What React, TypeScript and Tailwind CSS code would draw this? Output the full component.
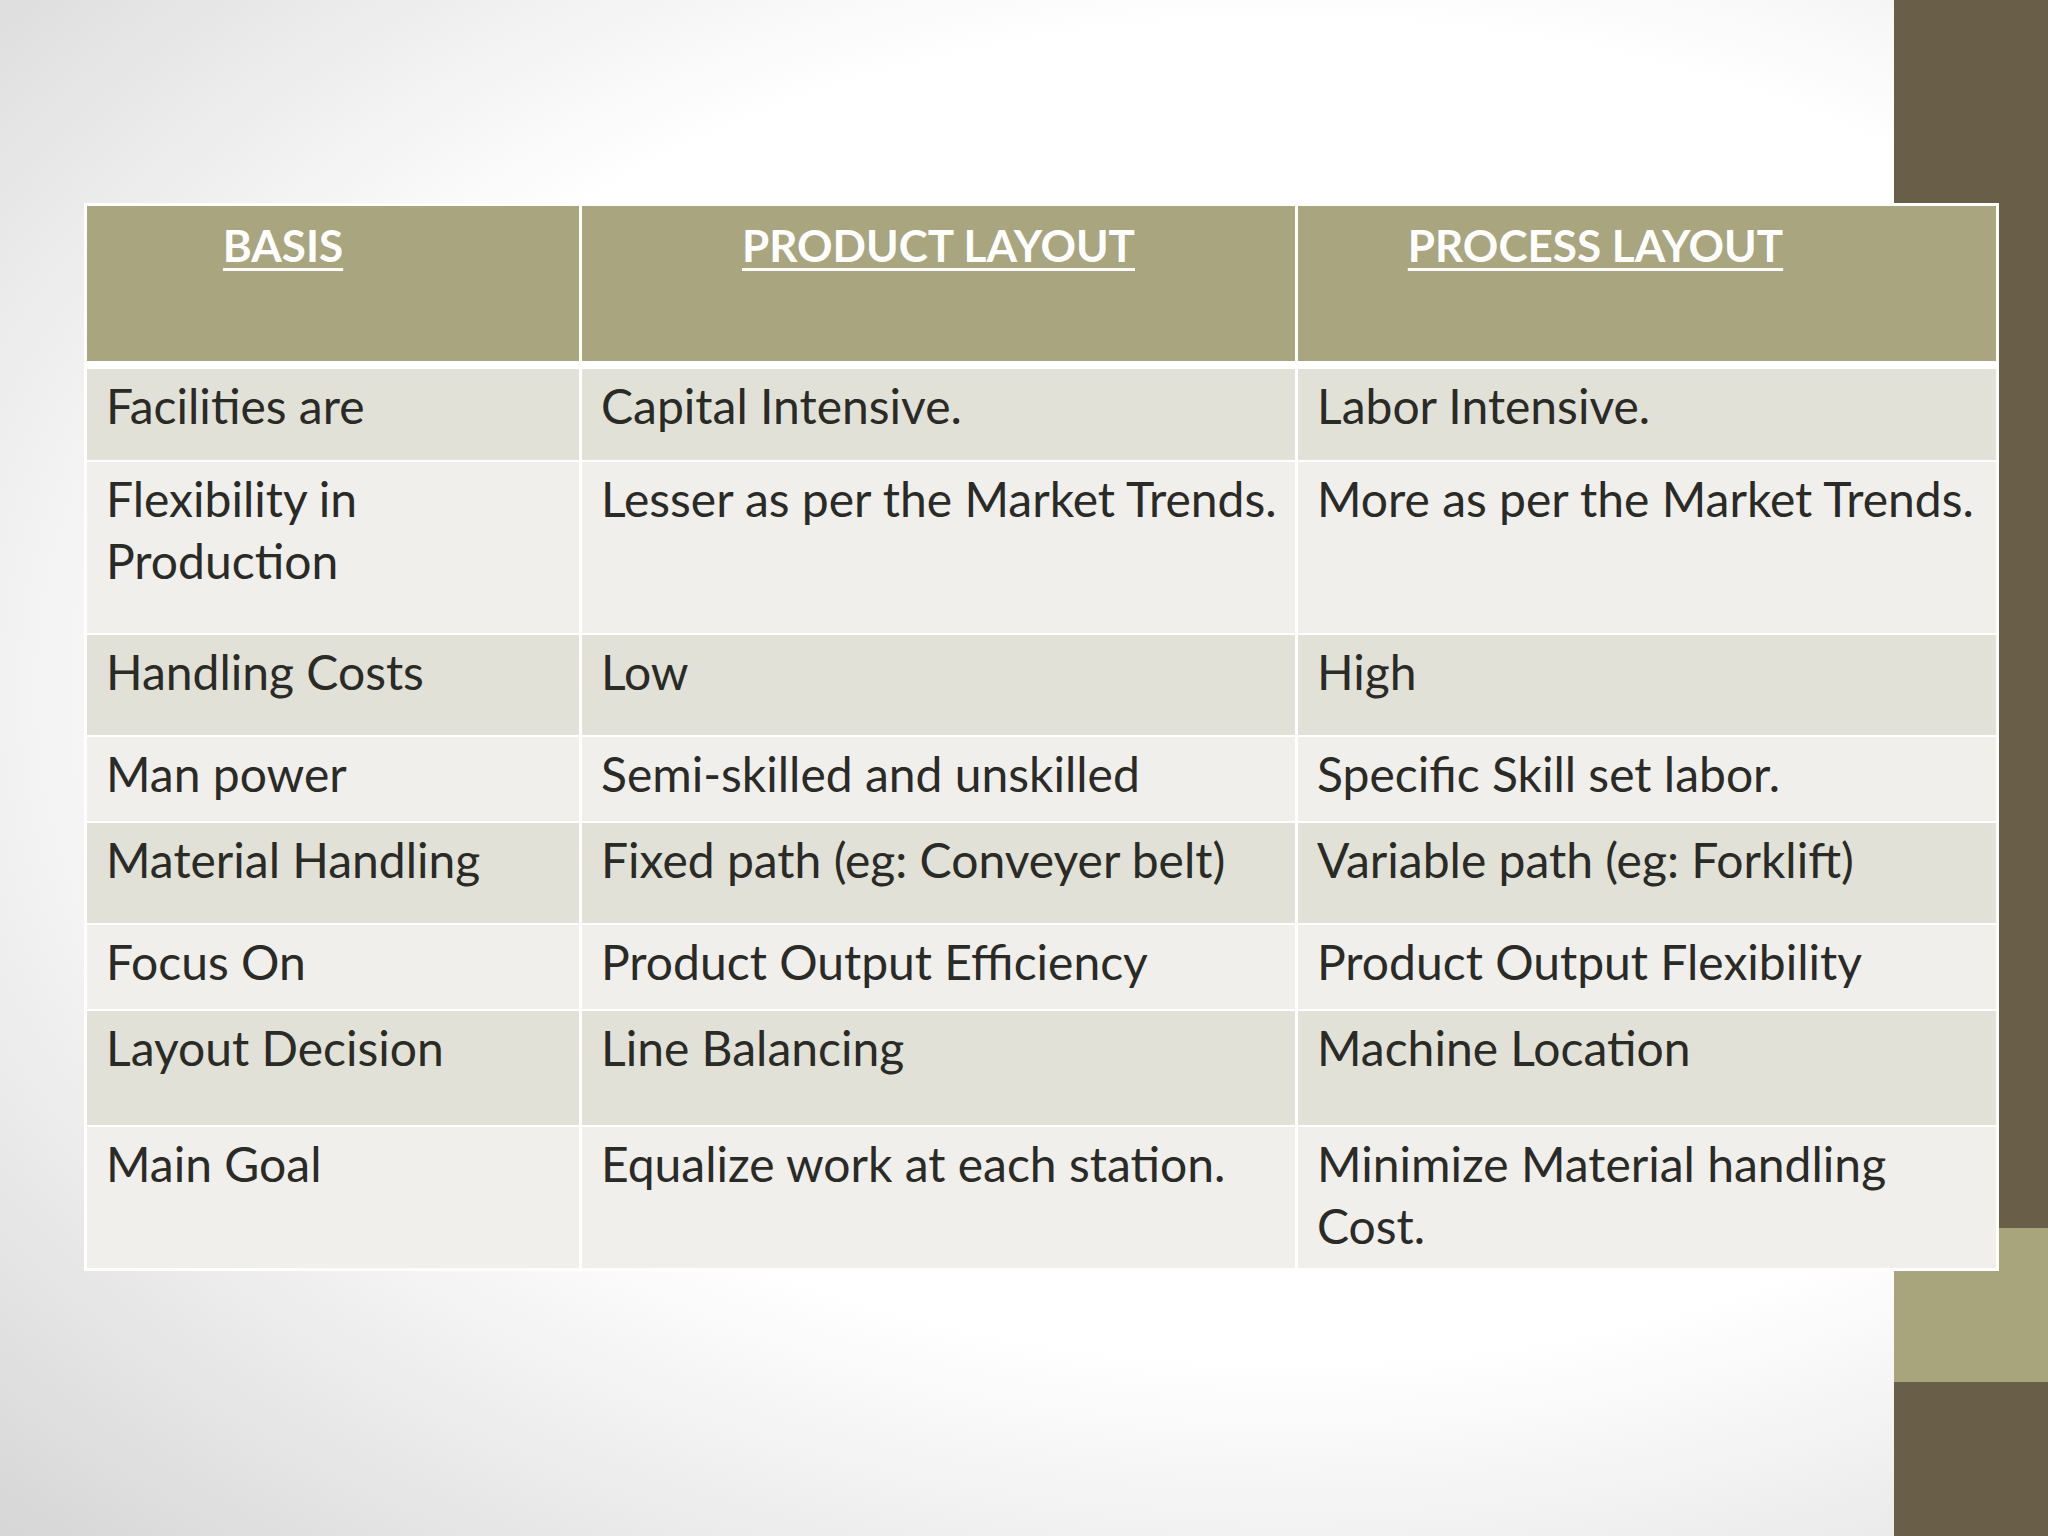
import React from 'react';

type Row = {
  basis: string[];
  product: string[];
  process: string[];
  height: string;
  tone: 'odd' | 'even';
};

const rows: Row[] = [
  { basis: ['Facilities are'], product: ['Capital Intensive.'], process: ['Labor Intensive.'], height: 'h-[91px]', tone: 'odd' },
  { basis: ['Flexibility in', 'Production'], product: ['Lesser as per the Market Trends.'], process: ['More as per the Market Trends.'], height: 'h-[171px]', tone: 'even' },
  { basis: ['Handling Costs'], product: ['Low'], process: ['High'], height: 'h-[100px]', tone: 'odd' },
  { basis: ['Man power'], product: ['Semi-skilled and unskilled'], process: ['Specific Skill set labor.'], height: 'h-[84px]', tone: 'even' },
  { basis: ['Material Handling'], product: ['Fixed path (eg: Conveyer belt)'], process: ['Variable path (eg: Forklift)'], height: 'h-[100px]', tone: 'odd' },
  { basis: ['Focus On'], product: ['Product Output Efficiency'], process: ['Product Output Flexibility'], height: 'h-[84px]', tone: 'even' },
  { basis: ['Layout Decision'], product: ['Line Balancing'], process: ['Machine Location'], height: 'h-[114px]', tone: 'odd' },
  { basis: ['Main Goal'], product: ['Equalize work at each station.'], process: ['Minimize Material handling', 'Cost.'], height: 'h-[141px]', tone: 'even' },
];

const Cell: React.FC<{ lines: string[]; tone: 'odd' | 'even' }> = ({ lines, tone }) => (
  <div
    className={`pl-[19px] pr-2 pt-[6px] text-[48px] leading-[62px] text-[#2a2a26] whitespace-nowrap ${
      tone === 'odd' ? 'bg-[#e1e1d7]' : 'bg-[#f0efeb]'
    }`}
  >
    {lines.map((l, i) => (
      <div key={i}>{l}</div>
    ))}
  </div>
);

const HeaderCell: React.FC<{ label: string; shift: string }> = ({ label, shift }) => (
  <div className={`bg-[#a9a57e] pt-[8px] text-center text-[44px] leading-[62px] font-bold text-white ${shift}`}>
    <span className="underline decoration-[3px] underline-offset-[6px]">{label}</span>
  </div>
);

export default function App() {
  return (
    <div
      className="flex w-[2048px] h-[1536px] overflow-hidden"
      style={{ fontFamily: 'Lato, "Open Sans", sans-serif' }}
    >
      <div className="w-[1894px] h-full bg-[radial-gradient(ellipse_at_68%_45%,#ffffff_56%,#d6d6d6_100%)]">
        <div className="relative z-10 ml-[84px] mt-[203px] w-[1915px] bg-white p-[3px] flex flex-col gap-y-[2px]">
          <div className="grid grid-cols-[492px_713px_698px] gap-x-[3px] h-[155px] mb-[6px]">
            <HeaderCell label="BASIS" shift="pr-[100px]" />
            <HeaderCell label="PRODUCT LAYOUT" shift="" />
            <HeaderCell label="PROCESS LAYOUT" shift="pr-[103px]" />
          </div>
          {rows.map((r, i) => (
            <div key={i} className={`grid grid-cols-[492px_713px_698px] gap-x-[3px] ${r.height}`}>
              <Cell lines={r.basis} tone={r.tone} />
              <Cell lines={r.product} tone={r.tone} />
              <Cell lines={r.process} tone={r.tone} />
            </div>
          ))}
        </div>
      </div>
      <div className="w-[154px] h-full flex flex-col">
        <div className="h-[1228px] bg-[#695f48]" />
        <div className="h-[154px] bg-[#a8a57d]" />
        <div className="flex-1 bg-[#695f48]" />
      </div>
    </div>
  );
}
